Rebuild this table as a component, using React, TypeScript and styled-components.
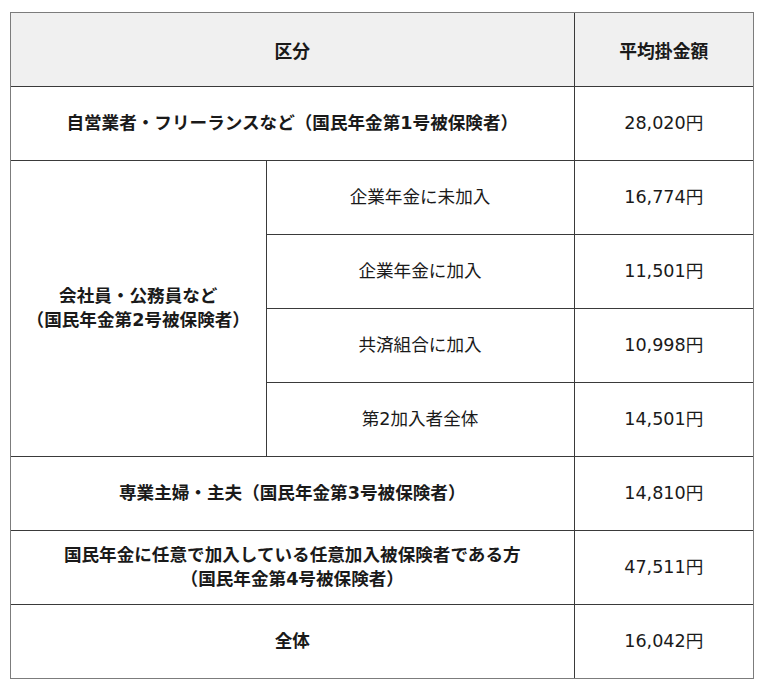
import React from 'react';
import styled, {createGlobalStyle} from 'styled-components';

const GlobalStyle = createGlobalStyle`
  body {
    margin: 0;
    background: #fff;
    font-family: "DejaVu Sans", "Noto Sans CJK JP", sans-serif;
    color: #1a1a1a;
  }
`;

const Page = styled.div`
  padding: 12px 0 0 10px;
`;

const Frame = styled.div`
  width: 742px;
  border: 1px solid #7c7c7c;
`;

const Table = styled.table`
  width: 100%;
  border-collapse: collapse;
  border-style: hidden;
  table-layout: fixed;
`;

const Th = styled.th`
  height: 73px;
  padding: 0;
  background: #f0f0f0;
  border: 1px solid #3a3a3a;
  font-size: 17.8px;
  font-weight: bold;
  text-align: center;
  vertical-align: middle;
`;

const Td = styled.td<{$bold?: boolean}>`
  height: 73px;
  padding: 0;
  border: 1px solid #3a3a3a;
  font-size: 17.6px;
  font-weight: ${p => (p.$bold ? 'bold' : 'normal')};
  line-height: 1.35;
  text-align: center;
  vertical-align: middle;
`;

type Sub = {label: string; amount: string};

const employees: Sub[] = [
  {label: '企業年金に未加入', amount: '16,774円'},
  {label: '企業年金に加入', amount: '11,501円'},
  {label: '共済組合に加入', amount: '10,998円'},
  {label: '第2加入者全体', amount: '14,501円'},
];

const App = () => {
  return (
    <>
      <GlobalStyle />
      <Page>
        <Frame>
          <Table>
            <colgroup>
              <col style={{width: 255}} />
              <col style={{width: 308}} />
              <col style={{width: 179}} />
            </colgroup>
            <thead>
              <tr>
                <Th colSpan={2}>区分</Th>
                <Th>平均掛金額</Th>
              </tr>
            </thead>
            <tbody>
              <tr>
                <Td $bold colSpan={2}>
                  自営業者・フリーランスなど（国民年金第1号被保険者）
                </Td>
                <Td>28,020円</Td>
              </tr>
              {employees.map((row, i) => (
                <tr key={row.label}>
                  {i === 0 && (
                    <Td $bold rowSpan={employees.length}>
                      会社員・公務員など
                      <br />
                      （国民年金第2号被保険者）
                    </Td>
                  )}
                  <Td>{row.label}</Td>
                  <Td>{row.amount}</Td>
                </tr>
              ))}
              <tr>
                <Td $bold colSpan={2}>
                  専業主婦・主夫（国民年金第3号被保険者）
                </Td>
                <Td>14,810円</Td>
              </tr>
              <tr>
                <Td $bold colSpan={2}>
                  国民年金に任意で加入している任意加入被保険者である方
                  <br />
                  （国民年金第4号被保険者）
                </Td>
                <Td>47,511円</Td>
              </tr>
              <tr>
                <Td $bold colSpan={2}>
                  全体
                </Td>
                <Td>16,042円</Td>
              </tr>
            </tbody>
          </Table>
        </Frame>
      </Page>
    </>
  );
};

export default App;
